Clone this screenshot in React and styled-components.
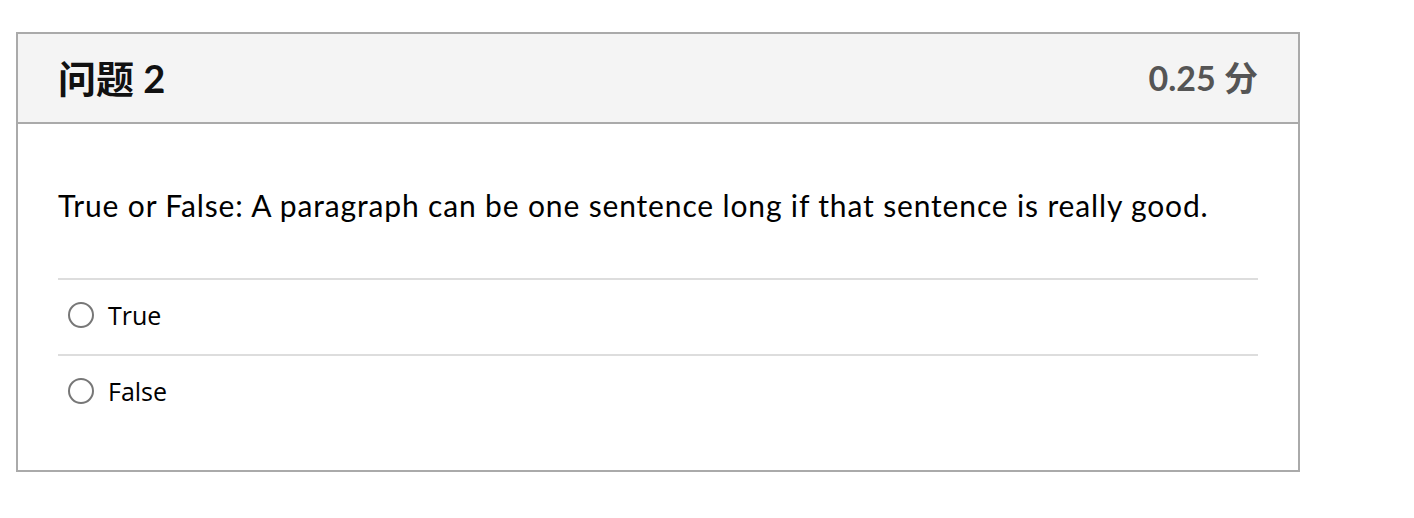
import React from 'react'
import styled, {createGlobalStyle} from 'styled-components'

const GlobalStyle = createGlobalStyle`
  body {
    margin: 8px;
    background: #fff;
    font-family: Lato, "Noto Sans CJK SC", sans-serif;
    color: #000;
  }
`
const Page = styled.div`
  padding: 24px 106px 0 8px;
`
const Question = styled.div`
  border: 2px solid #aaa;
  background: #fff;
`
const Header = styled.div`
  display: flex;
  align-items: center;
  justify-content: space-between;
  height: 88px;
  padding: 0 40px;
  background: #f4f4f4;
  border-bottom: 2px solid #aaa;
`
const Title = styled.h2`
  margin: 0 0 4px;
  font-size: 38px;
  font-weight: 700;
  color: #111;
`
const Points = styled.div`
  margin-bottom: 4px;
  font-size: 34px;
  font-weight: 700;
  color: #555;
`
const Body = styled.div`
  padding: 60px 40px 40px;
`
const Text = styled.p`
  margin: 0 0 52px;
  font-size: 30px;
  line-height: 42px;
  letter-spacing: 0.85px;
`
const Answers = styled.div`
  display: flex;
  flex-direction: column;
`
const Answer = styled.label`
  display: flex;
  align-items: center;
  gap: 14px;
  box-sizing: border-box;
  height: 76px;
  padding: 0 0 5px 10px;
  border-top: 2px solid #ddd;
  font-family: "Open Sans", sans-serif;
  font-size: 25px;
`
const Radio = styled.span`
  width: 22px;
  height: 22px;
  border: 2px solid #777;
  border-radius: 50%;
  flex-shrink: 0;
`

const answers = ['True', 'False']

const App = () => {
	return (
		<Page>
			<GlobalStyle/>
			<Question>
				<Header>
					<Title>问题 2</Title>
					<Points>0.25 分</Points>
				</Header>
				<Body>
					<Text>True or False: A paragraph can be one sentence long if that sentence is really good.</Text>
					<Answers>
						{answers.map(a => (
							<Answer key = {a}>
								<Radio/>
								{a}
							</Answer>
						))}
					</Answers>
				</Body>
			</Question>
		</Page>
	)
}
export default App
